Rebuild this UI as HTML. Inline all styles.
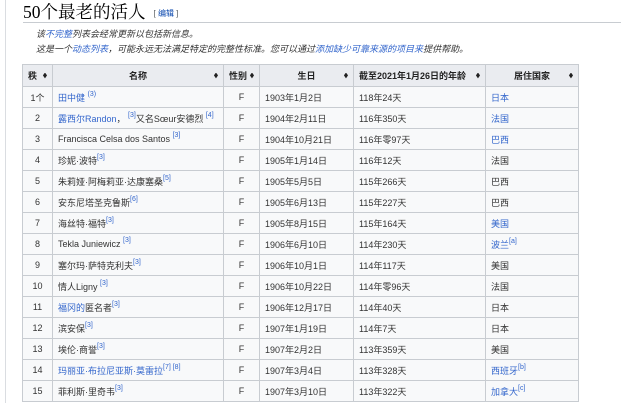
<!DOCTYPE html>
<html><head><meta charset="utf-8"><style>
body{margin:0;background:#fff;width:621px;height:403px;overflow:hidden;position:relative;font-family:"Liberation Sans","Noto Sans CJK SC",sans-serif;color:#333}
.vl{position:absolute;left:5px;top:0;width:1px;height:403px;background:#dadde1}
h2{position:absolute;left:23px;top:2px;margin:0;font-family:"Liberation Serif","Noto Serif CJK SC",serif;font-weight:normal;font-size:17.5px;color:#000;width:598px;border-bottom:1px solid #c8ccd1;height:20px;line-height:20px}
h2 span{font-family:"Liberation Sans","Noto Sans CJK SC",sans-serif;font-size:8px;color:#54595d;margin-left:8px;vertical-align:2px}
h2 span a{color:#0645ad}
.n{position:absolute;left:36px;font-size:9px;font-style:italic;color:#333;white-space:nowrap}
a{color:#3366cc;text-decoration:none}
table{position:absolute;left:22px;top:64px;border-collapse:collapse;background:#f8f9fa;font-size:9px;table-layout:fixed}
td,th{border:1px solid #c8ccd1;padding:0 5px;height:20px;white-space:nowrap;overflow:hidden}
th{background:#eaecf0;height:21px;font-weight:bold;position:relative;color:#222}
th:after{content:"\25C6";position:absolute;right:4px;top:6px;font-size:6px;transform:scaleX(.7)}
td.c{text-align:center}
sup{font-size:7px;color:#3366cc;vertical-align:5px;line-height:0}
</style></head><body>
<div class="vl"></div>
<h2>50个最老的活人<span>[ <a>编辑</a> ]</span></h2>
<div class="n" style="top:27px">该<a>不完整</a>列表会经常更新以包括新信息。</div>
<div class="n" style="top:42px">这是一个<a>动态列表</a>，可能永远无法满足特定的完整性标准。您可以通过<a>添加缺少可靠来源的项目来</a>提供帮助。</div>
<table>
<colgroup><col style="width:30px"><col style="width:171px"><col style="width:36px"><col style="width:94px"><col style="width:132px"><col style="width:93px"></colgroup>
<tr><th style="text-align:left">秩</th><th>名称</th><th style="text-align:left">性别</th><th>生日</th><th style="text-align:left">截至2021年1月26日的年龄</th><th>居住国家</th></tr>
<tr><td class="c">1个</td><td><a>田中健</a> <sup>(3)</sup></td><td class="c">F</td><td>1903年1月2日</td><td>118年24天</td><td><a>日本</a></td></tr>
<tr><td class="c">2</td><td><a>露西尔Randon</a>， <sup>[3]</sup>又名Sœur安德烈 <sup>[4]</sup></td><td class="c">F</td><td>1904年2月11日</td><td>116年350天</td><td><a>法国</a></td></tr>
<tr><td class="c">3</td><td>Francisca Celsa dos Santos <sup>[3]</sup></td><td class="c">F</td><td>1904年10月21日</td><td>116年零97天</td><td><a>巴西</a></td></tr>
<tr><td class="c">4</td><td>珍妮·波特<sup>[3]</sup></td><td class="c">F</td><td>1905年1月14日</td><td>116年12天</td><td>法国</td></tr>
<tr><td class="c">5</td><td>朱莉娅·阿梅莉亚·达康塞桑<sup>[5]</sup></td><td class="c">F</td><td>1905年5月5日</td><td>115年266天</td><td>巴西</td></tr>
<tr><td class="c">6</td><td>安东尼塔圣克鲁斯<sup>[6]</sup></td><td class="c">F</td><td>1905年6月13日</td><td>115年227天</td><td>巴西</td></tr>
<tr><td class="c">7</td><td>海丝特·福特<sup>[3]</sup></td><td class="c">F</td><td>1905年8月15日</td><td>115年164天</td><td><a>美国</a></td></tr>
<tr><td class="c">8</td><td>Tekla Juniewicz <sup>[3]</sup></td><td class="c">F</td><td>1906年6月10日</td><td>114年230天</td><td><a>波兰</a><sup>[a]</sup></td></tr>
<tr><td class="c">9</td><td>塞尔玛·萨特克利夫<sup>[3]</sup></td><td class="c">F</td><td>1906年10月1日</td><td>114年117天</td><td>美国</td></tr>
<tr><td class="c">10</td><td>情人Ligny <sup>[3]</sup></td><td class="c">F</td><td>1906年10月22日</td><td>114年零96天</td><td>法国</td></tr>
<tr><td class="c">11</td><td><a>福冈的</a>匿名者<sup>[3]</sup></td><td class="c">F</td><td>1906年12月17日</td><td>114年40天</td><td>日本</td></tr>
<tr><td class="c">12</td><td>滨安保<sup>[3]</sup></td><td class="c">F</td><td>1907年1月19日</td><td>114年7天</td><td>日本</td></tr>
<tr><td class="c">13</td><td>埃伦·商誉<sup>[3]</sup></td><td class="c">F</td><td>1907年2月2日</td><td>113年359天</td><td>美国</td></tr>
<tr><td class="c">14</td><td><a>玛丽亚·布拉尼亚斯·莫雷拉</a><sup>[7] [8]</sup></td><td class="c">F</td><td>1907年3月4日</td><td>113年328天</td><td><a>西班牙</a><sup>[b]</sup></td></tr>
<tr><td class="c">15</td><td>菲利斯·里奇韦<sup>[3]</sup></td><td class="c">F</td><td>1907年3月10日</td><td>113年322天</td><td><a>加拿大</a><sup>[c]</sup></td></tr>
</table>
</body></html>
